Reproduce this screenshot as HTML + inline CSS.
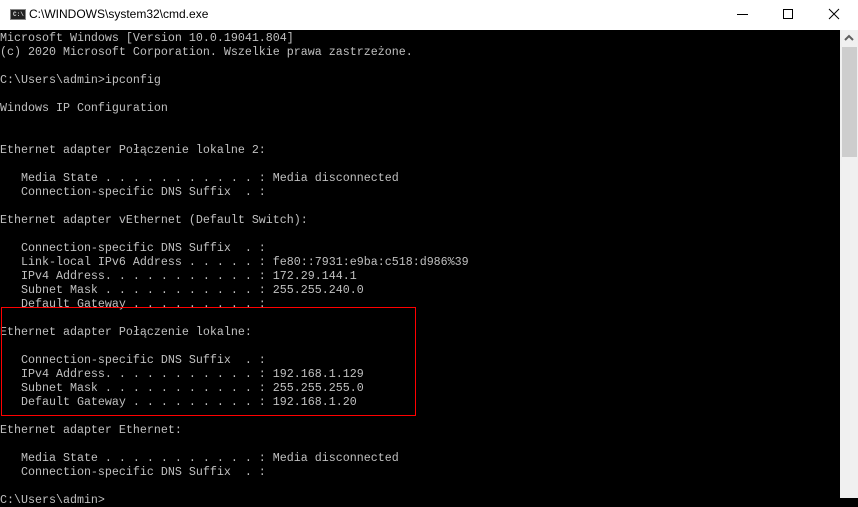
<!DOCTYPE html>
<html><head><meta charset="utf-8"><style>
html,body{margin:0;padding:0;width:858px;height:498px;overflow:hidden;background:#000;}
#tb{position:absolute;left:0;top:0;width:858px;height:30px;background:#fff;}
#tb .t{position:absolute;left:29px;top:7px;font:12px "Liberation Sans",sans-serif;color:#000;}
#ico{position:absolute;left:10px;top:9px;width:16px;height:11px;background:#222;border:1px solid #888;box-sizing:border-box;}
#ico span{position:absolute;left:2px;top:1px;font:bold 6px "Liberation Mono",monospace;color:#ddd;}
pre{position:absolute;left:0;top:31px;margin:0;font:11.67px/14px "Liberation Mono",monospace;color:#c0c0c0;white-space:pre;}
#sb{position:absolute;left:840px;top:30px;width:18px;height:468px;background:#f0f0f0;}
#th{position:absolute;left:842px;top:47px;width:15px;height:110px;background:#cdcdcd;}
#box{position:absolute;left:1px;top:307px;width:415px;height:109px;border:1px solid #ff0000;box-sizing:border-box;z-index:5;}
</style></head><body>
<div id="tb"><div id="ico"><span>C:\</span></div><div class="t">C:\WINDOWS\system32\cmd.exe</div>
<svg style="position:absolute;left:700px;top:0" width="158" height="30">
<line x1="37" y1="14.5" x2="48" y2="14.5" stroke="#000" stroke-width="1"/>
<rect x="83.5" y="9.5" width="9" height="9" fill="none" stroke="#000"/>
<path d="M129 9 L139 19 M139 9 L129 19" stroke="#000" stroke-width="1"/>
</svg></div>
<pre>Microsoft Windows [Version 10.0.19041.804]
(c) 2020 Microsoft Corporation. Wszelkie prawa zastrzeżone.

C:\Users\admin>ipconfig

Windows IP Configuration


Ethernet adapter Połączenie lokalne 2:

   Media State . . . . . . . . . . . : Media disconnected
   Connection-specific DNS Suffix  . :

Ethernet adapter vEthernet (Default Switch):

   Connection-specific DNS Suffix  . :
   Link-local IPv6 Address . . . . . : fe80::7931:e9ba:c518:d986%39
   IPv4 Address. . . . . . . . . . . : 172.29.144.1
   Subnet Mask . . . . . . . . . . . : 255.255.240.0
   Default Gateway . . . . . . . . . :

Ethernet adapter Połączenie lokalne:

   Connection-specific DNS Suffix  . :
   IPv4 Address. . . . . . . . . . . : 192.168.1.129
   Subnet Mask . . . . . . . . . . . : 255.255.255.0
   Default Gateway . . . . . . . . . : 192.168.1.20

Ethernet adapter Ethernet:

   Media State . . . . . . . . . . . : Media disconnected
   Connection-specific DNS Suffix  . :

C:\Users\admin></pre>
<div id="box"></div>
<div id="sb"><svg width="18" height="17"><path d="M5 10 L9 6 L13 10" fill="none" stroke="#606060" stroke-width="2"/></svg></div>
<div id="th"></div>
</body></html>
